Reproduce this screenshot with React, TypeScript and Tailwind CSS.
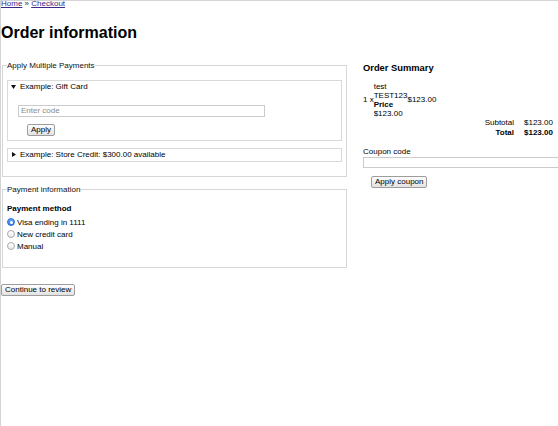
import React from "react";

function Btn({ children, extra }: { children: React.ReactNode; extra: string }) {
  return (
    <button
      className={
        "block h-[12px] px-[3px] leading-[10px] text-[8px] text-black border border-[#9d9d9d] rounded-[2px] bg-[linear-gradient(#fefefe,#e2e2e2)] font-['Liberation_Sans',Arial,sans-serif] " +
        extra
      }
    >
      {children}
    </button>
  );
}

function Radio({ checked }: { checked?: boolean }) {
  return checked ? (
    <span className="flex w-[8px] h-[8px] items-center justify-center rounded-full border border-[#2a6ad8] bg-[linear-gradient(#6aa6f8,#2f7ae8)]">
      <span className="block w-[3px] h-[3px] rounded-full bg-white" />
    </span>
  ) : (
    <span className="block w-[8px] h-[8px] rounded-full border border-[#a9a9a9] bg-[linear-gradient(#ffffff,#ececec)]" />
  );
}

function Down() {
  return (
    <svg width="5" height="4" viewBox="0 0 5 4" className="block">
      <polygon points="0,0 5,0 2.5,4" fill="#111" />
    </svg>
  );
}

function Right() {
  return (
    <svg width="4" height="5" viewBox="0 0 4 5" className="block">
      <polygon points="0,0 4,2.5 0,5" fill="#111" />
    </svg>
  );
}

export default function App() {
  return (
    <div className="w-[558px] h-[426px] overflow-hidden border-t border-l border-[#d4d4d4] bg-white text-[8px] leading-[9px] text-black font-['Liberation_Sans',Arial,sans-serif]">
      <div className="-mt-[1.5px] h-[8px] leading-[8px]">
        <a className="underline text-[#3c2a86]">Home</a>
        <span className="text-[#333]"> » </span>
        <a className="underline text-[#3c2a86]">Checkout</a>
      </div>
      <h1 className="mt-[16px] text-[16px] leading-[18px] font-bold">Order information</h1>

      <div className="flex mt-[19.5px]">
        {/* Left column */}
        <div className="w-[362px] shrink-0">
          <fieldset className="ml-[1px] w-[345px] border border-[#d6d6d6] px-[4px] pt-[10px] pb-[14px]">
            <legend className="leading-[9px] text-[#111]">Apply Multiple Payments</legend>
            <div className="border border-[#d9d9d9] pt-[1px] pb-[4px]">
              <div className="flex items-center h-[9px] pl-[3px] gap-[4px]">
                <Down />
                <span>Example: Gift Card</span>
              </div>
              <div className="mt-[14px] ml-[10px] w-[247px] h-[12px] border border-[#cbcbcb] pl-[2px] leading-[10px] text-[#8a8a8a]">
                Enter code
              </div>
              <Btn extra="mt-[7px] ml-[19px]">Apply</Btn>
            </div>
            <div className="mt-[7px] border border-[#d9d9d9] pt-[1px] pb-[2px]">
              <div className="flex items-center h-[9px] pl-[3px] gap-[4px]">
                <span className="w-[5px] flex justify-center">
                  <Right />
                </span>
                <span>Example: Store Credit: $300.00 available</span>
              </div>
            </div>
          </fieldset>

          <fieldset className="mt-[8px] ml-[1px] w-[345px] border border-[#d6d6d6] px-[4px] pt-[10px] pb-[15px]">
            <legend className="leading-[9px] text-[#111]">Payment information</legend>
            <div className="font-bold h-[9px]">Payment method</div>
            <div className="mt-[3px]">
              <div className="flex items-center h-[12px] gap-[2px]">
                <Radio checked />
                <span>Visa ending in 1111</span>
              </div>
              <div className="flex items-center h-[12px] gap-[2px]">
                <Radio />
                <span>New credit card</span>
              </div>
              <div className="flex items-center h-[12px] gap-[2px]">
                <Radio />
                <span>Manual</span>
              </div>
            </div>
          </fieldset>

          <Btn extra="mt-[16px]">Continue to review</Btn>
        </div>

        {/* Right column */}
        <div className="flex-1 min-w-0">
          <h3 className="mt-[2px] text-[9.36px] leading-[11px] font-bold">Order Summary</h3>
          <div className="mt-[7.5px] flex items-center">
            <span>1 x</span>
            <div className="flex flex-col">
              <span>test</span>
              <span>TEST123</span>
              <span className="font-bold">Price</span>
              <span>$123.00</span>
            </div>
            <span>$123.00</span>
          </div>
          <div className="flex justify-end pr-[2px] h-[10px] leading-[10px] mt-[0.5px]">
            <span>Subtotal</span>
            <span className="w-[32px] ml-[10px]">$123.00</span>
          </div>
          <div className="flex justify-end pr-[2px] h-[10px] leading-[10px] font-bold">
            <span>Total</span>
            <span className="w-[32px] ml-[10px]">$123.00</span>
          </div>
          <div className="mt-[8.5px] h-[9px]">Coupon code</div>
          <div className="mt-[1px] w-[200px] h-[11px] border border-[#cbcbcb]" />
          <Btn extra="mt-[8px] ml-[8px]">Apply coupon</Btn>
        </div>
      </div>
    </div>
  );
}
